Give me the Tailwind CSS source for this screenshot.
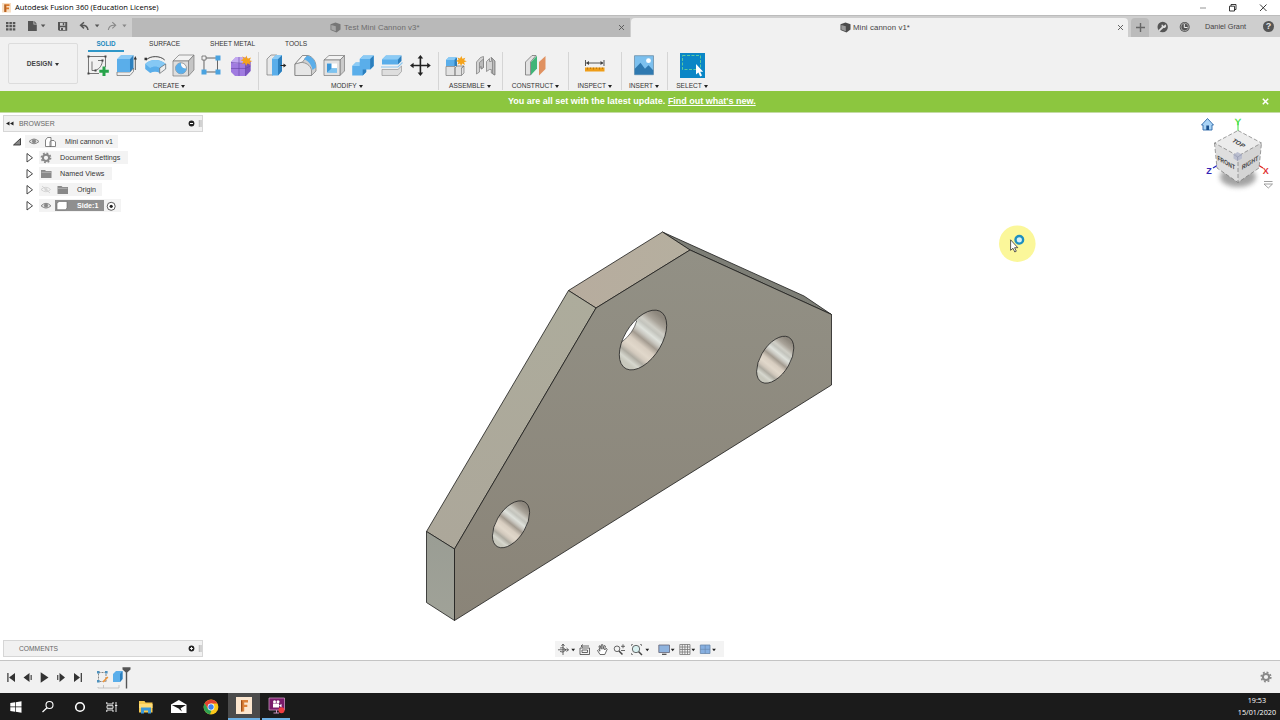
<!DOCTYPE html>
<html lang="en">
<head>
    <meta charset="UTF-8">
    <meta name="viewport" content="width=device-width, initial-scale=1.0">
    <title>Autodesk Fusion 360</title>
    <script src="https://cdn.jsdelivr.net/npm/@tailwindcss/browser@4"></script>
</head>
<body class="bg-white overflow-hidden">
<div class="w-[1280px] h-[720px] flex flex-col overflow-hidden font-['Liberation_Sans',Arial,sans-serif] text-[6.6px] leading-none text-[#333]">

    <!-- Title bar -->
    <header class="h-[15px] shrink-0 flex items-center bg-white">
        <svg class="w-[11px] h-[11px] ml-[1px]" viewBox="0 0 11 11">
            <rect x="1" y="1" width="9" height="9.5" fill="#f8dfc4"/>
            <path d="M3.5 10V2.2H8.5V4H5.5V5.5H8V7.2H5.5V10Z" fill="#d9792b"/>
            <path d="M3.5 10V2.2L4.5 3V10Z" fill="#9c4f16"/>
        </svg>
        <span class="ml-[3px] pt-[1px] font-['Open_Sans',sans-serif] text-[7.6px] text-black whitespace-nowrap">Autodesk Fusion 360 (Education License)</span>
        <svg class="w-[80px] h-[14px] ml-auto" viewBox="1200 0 80 14" fill="none" stroke="#222" stroke-width="0.9">
            <path d="M1199.5 7H1206" stroke="#888"/>
            <path d="M1229.5 5.2H1234.5V10H1229.5ZM1231 5V3.5H1236V8.5H1234.5"/>
            <path d="M1260 3.5L1266.5 10M1266.5 3.5L1260 10"/>
        </svg>
    </header>

    <!-- Document tabs -->
    <nav class="h-[22px] shrink-0 flex items-stretch bg-[#cecece] border-t border-[#bcbcbc] text-[7.8px]">
        <svg class="w-[132px] h-[21px] shrink-0" viewBox="0 16 132 21" fill="#555">
            <path d="M6 22h2.5v2.2H6zM9.4 22h2.5v2.2H9.4zM12.8 22h2.5v2.2h-2.5zM6 25.1h2.5v2.2H6zM9.4 25.1h2.5v2.2H9.4zM12.8 25.1h2.5v2.2h-2.5zM6 28.2h2.5v2.2H6zM9.4 28.2h2.5v2.2H9.4zM12.8 28.2h2.5v2.2h-2.5z"/>
            <path d="M28 21H33.5V24.5H36.8V31H28ZM34.3 21L36.8 23.7H34.3Z"/>
            <path d="M40.8 24.5H45.4L43.1 27.3ZM94.8 24.5H99.4L97.1 27.3Z"/>
            <path d="M122.3 24.5H126.5L124.4 27.2Z" fill="#888"/>
            <path d="M58 22H67.2V30.8H59L58 29.8ZM60 22.8V25.8H65.3V22.8ZM60 27.3V30H65.3V27.3Z" fill-rule="evenodd"/>
            <path d="M61 28H63V30H61ZM62.8 23H64.2V25.2H62.8Z"/>
            <path d="M84 22.2L80.6 25.3L84 28.4M81 25.3C85.5 24.8 87.5 26.5 88 30" fill="none" stroke="#555" stroke-width="1.5"/>
            <path d="M112.3 22.2L115.7 25.3L112.3 28.4M115.3 25.3C110.8 24.8 108.8 26.5 108.3 30" fill="none" stroke="#888" stroke-width="1.1"/>
        </svg>
        <div class="w-[498px] mt-[2px] flex items-center bg-[#b9b9b9] text-[#6c6c6c]">
            <svg class="w-[11px] h-[11px] ml-[198px]" viewBox="0 0 11 11">
                <path d="M.5 2.2L5.5 .5L10.5 2.2V7.5L6.5 10.5L.5 8Z" fill="#777"/>
                <path d="M1.3 3L5.8 4.3V9.3L1.3 7.4Z" fill="#a6a6a6"/>
            </svg>
            <span class="ml-[3px] pt-px whitespace-nowrap tracking-[0.1px]">Test Mini Cannon v3*</span>
            <svg class="w-[7px] h-[7px] ml-auto mr-[5px]" viewBox="0 0 7 7" stroke="#555" stroke-width="0.9"><path d="M1 1L6 6M6 1L1 6"/></svg>
        </div>
        <div class="w-[497px] ml-[1px] mt-[2px] flex items-center bg-[#f1f1f1] rounded-t-sm text-[#444]">
            <svg class="w-[11px] h-[11px] ml-[209px]" viewBox="0 0 11 11">
                <path d="M.5 2.2L5.5 .5L10.5 2.2V7.5L6.5 10.5L.5 8Z" fill="#4c4c4c"/>
                <path d="M1.3 3L5.8 4.3V9.3L1.3 7.4Z" fill="#999"/>
            </svg>
            <span class="ml-[2px] pt-px whitespace-nowrap tracking-[0.1px]">Mini cannon v1*</span>
            <svg class="w-[7px] h-[7px] ml-auto mr-[4px]" viewBox="0 0 7 7" stroke="#555" stroke-width="0.9"><path d="M1 1L6 6M6 1L1 6"/></svg>
        </div>
        <div class="w-[18px] ml-[3px] mt-[2px] flex items-center justify-center bg-[#bbb] rounded-t-sm">
            <svg class="w-[9px] h-[9px]" viewBox="0 0 9 9" stroke="#666" stroke-width="1.4"><path d="M4.5 0V9M0 4.5H9"/></svg>
        </div>
        <div class="flex-1 flex items-center text-[#444] text-[7.3px]">
            <svg class="w-[50px] h-[14px]" viewBox="1149 19 50 14">
                <circle cx="1162.7" cy="26" r="5.2" fill="#555"/>
                <path d="M1159 29.8L1163 26" stroke="#ddd" stroke-width="1.8"/>
                <path d="M1165.5 23.2L1163.7 25L1162 23.2A2.4 2.4 0 1 0 1166.3 25Z" fill="#ddd"/>
                <circle cx="1184.7" cy="26" r="5" fill="#555"/>
                <circle cx="1184.7" cy="26" r="3.8" fill="none" stroke="#bbb" stroke-width=".7"/>
                <path d="M1184.3 23V26.5H1187.5" fill="none" stroke="#eee"/>
            </svg>
            <span class="ml-[6px] whitespace-nowrap">Daniel Grant</span>
            <span class="w-[11px] h-[11px] ml-auto mr-[6px] rounded-full bg-[#555] text-[#e5e5e5] text-[9px] font-bold flex items-center justify-center">?</span>
        </div>
    </nav>

    <!-- Ribbon -->
    <section class="h-[54px] shrink-0 flex bg-[#f1f1f1]">
        <div class="w-[70px] h-[41px] ml-[8px] mt-[6px] pt-[1px] flex items-center justify-center gap-[3px] border border-[#dcdcdc] rounded-xs font-bold text-[#444]">
            DESIGN <span class="border-x-2 border-x-transparent border-t-[3px] border-t-[#333]"></span>
        </div>
        <div class="ml-[6px] flex flex-col">
            <div class="h-[15px] flex">
                <div class="w-[36px] ml-[4px] pt-[2px] flex items-center justify-center border-b-2 border-[#2f97c8] text-[#2088bd] font-bold text-[6.3px]">SOLID</div>
                <span class="w-[31px] ml-[25px] mt-[4px] whitespace-nowrap">SURFACE</span>
                <span class="w-[46px] ml-[30px] mt-[4px] whitespace-nowrap">SHEET METAL</span>
                <span class="ml-[29px] mt-[4px] whitespace-nowrap">TOOLS</span>
            </div>
            <div class="flex h-[38px] divide-x divide-[#d5d5d5]">
                <div class="w-[175px] flex flex-col">
                    <div class="flex h-[28px]">
                        <svg class="w-[28.8px] h-[28px]" viewBox="0 0 28.8 28" fill="none" stroke="#555" stroke-width=".8">
                            <path d="M4.5 4V22M4 4.5H22M4 21.5H15M21.5 4V15"/>
                            <path d="M8 18.5V9.5M8 18.5H12M11 18.5C16 17 18 13 18.5 8.5H14"/>
                            <path d="M3.5 3.5h2v2h-2zM20.5 3.5h2v2h-2zM3.5 20.5h2v2h-2zM10.5 17.5h2v2h-2zM17.5 7.5h2v2h-2z" fill="#444" stroke="none"/>
                            <path d="M20 14.5V24M15.3 19.2H24.8" stroke="#27a34a" stroke-width="3"/>
                        </svg>
                        <svg class="w-[28.8px] h-[28px]" viewBox="0 0 28.8 28">
                            <path d="M4 20L17 20L20.5 16V19.5L17 23.5H4Z" fill="#eee" stroke="#555" stroke-width=".6"/>
                            <path d="M4 7L8 3H20.5L17 7Z" fill="#8ccbf5"/><path d="M4 7H17V20H4Z" fill="#5aaeea"/><path d="M17 7L20.5 3V16L17 20Z" fill="#2c7fbd"/>
                            <path d="M22.3 18V6" stroke="#333" stroke-width=".8"/><path d="M20.7 7.5L22.3 4L23.9 7.5Z" fill="#333"/>
                        </svg>
                        <svg class="w-[28.8px] h-[28px]" viewBox="0.8 0 28.8 28">
                            <path d="M5 8C9 3.5 19 3.5 23.5 8" fill="none" stroke="#333" stroke-width=".9"/><path d="M3.3 5.7h2.5v2.5H3.3z" fill="#333"/>
                            <path d="M4 12C9 6.5 19 6.5 24.5 12V17L18.5 21C16 19.5 12 19.5 9 21L4 17Z" fill="#5aaeea"/>
                            <path d="M4 12C9 6.5 19 6.5 24.5 12L18.5 16C16 14 12 14 9 16Z" fill="#85c8f4"/>
                            <path d="M18.5 16L24.5 12V17L18.5 21.5Z" fill="#eee" stroke="#555" stroke-width=".6"/>
                        </svg>
                        <svg class="w-[28.8px] h-[28px]" viewBox="0 0 28.8 28" stroke="#777" stroke-width=".7">
                            <path d="M3 9L9 3H24L18.5 9Z" fill="#f2f2f2"/><path d="M18.5 9L24 3V18L18.5 24Z" fill="#c5c5c5"/><path d="M3 9H18.5V24H3Z" fill="#dedede"/>
                            <circle cx="11" cy="16.3" r="5.5" fill="#fafafa"/><path d="M11 10.8A5.5 5.5 0 1 0 16.5 16.3C13 17 10.5 14.5 11 10.8Z" fill="#5aaeea" stroke="none"/>
                        </svg>
                        <svg class="w-[28.8px] h-[28px]" viewBox="0 0 28.8 28">
                            <path d="M5 6V20H18.5V6Z" fill="none" stroke="#555" stroke-width=".9"/>
                            <path d="M3 4h4v4H3z" fill="#f1f1f1" stroke="#555" stroke-width=".7"/>
                            <path d="M16.5 3.5h5v5h-5zM2.5 17.5h5v5h-5zM16.5 17.5h5v5h-5z" fill="#4aa3e0"/>
                        </svg>
                        <svg class="w-[28.8px] h-[28px]" viewBox="0 0 28.8 28">
                            <path d="M3 10L8 5H18L22.5 9V19L18 24H7L3 20Z" fill="#a07be0"/><path d="M3 10L8 5H18L22.5 9L17 11.5H6Z" fill="#c3aaf1"/><path d="M17.5 11.5L22.5 9V19L17.5 24Z" fill="#7b55bf"/>
                            <path d="M11 5V24M3 16.5H17.5L22.5 14M17.5 11V24M3 10.5L17.5 11.5" fill="none" stroke="#6644a6" stroke-width=".6"/>
                            <path d="M18.4 3.5L19.6 6.8L23 5.5L21.6 8.4L24.5 9L21.6 10.3L22.5 13L19.5 11.3L18 14L17 11L14 12L15.3 9.3L12.5 8.3L15.5 7L14.3 4.3L17.2 6.2Z" fill="#f5a31b"/>
                        </svg>
                    </div>
                    <div class="h-[10px] pt-[2px] pl-[69px] flex items-center gap-[2px]">CREATE <span class="border-x-2 border-x-transparent border-t-[3px] border-t-[#222]"></span></div>
                </div>
                <div class="w-[180px] pl-[3px] flex flex-col">
                    <div class="flex h-[28px]">
                        <svg class="w-[28.8px] h-[28px]" viewBox="0 0 28.8 28">
                            <path d="M5 7L9 3H15L11 7V23H5Z" fill="#e8e8e8" stroke="#777" stroke-width=".7"/>
                            <path d="M10 7L14 3H20V19L16 23.5H10Z" fill="#5aaeea"/><path d="M16 7L20 3V19L16 23.5Z" fill="#2c7fbd"/><path d="M10 7L14 3H20L16 7Z" fill="#8ccbf5"/>
                            <path d="M18.5 13.5H22" stroke="#222"/><path d="M21.5 11.5L24.3 13.5L21.5 15.5Z" fill="#222"/>
                        </svg>
                        <svg class="w-[28.8px] h-[28px]" viewBox="-0.5 0 28.8 28" stroke="#777" stroke-width=".7">
                            <path d="M3.5 12L11 3.5H17C21 5 24.5 9 24.5 15V19L20 23.5H3.5Z" fill="#d0d0d0"/>
                            <path d="M3.5 12C3.5 12 5 10.5 11 10.5C16 11 20 15 20 19V23.5H3.5Z" fill="#e6e6e6"/><path d="M3.5 12L11 3.5H16L11 10Z" fill="#f5f5f5"/>
                            <path d="M12.5 7L16 3.5C21 5 24.5 9 24.5 15.5L21 18C20 13 17.5 9.5 12.5 7Z" fill="#5aaeea" stroke="none"/>
                        </svg>
                        <svg class="w-[28.8px] h-[28px]" viewBox="0 0 28.8 28" stroke="#777" stroke-width=".7">
                            <path d="M4 8L9 3.5H24.5L20 8Z" fill="#f3f3f3"/><path d="M20 8L24.5 3.5V19L20 23.5Z" fill="#cbcbcb"/><path d="M4 8H20V23.5H4Z" fill="#e2e2e2"/>
                            <path d="M7 11.5H17V20.5H7Z" fill="#fff" stroke="none"/><path d="M7 11.5L11.5 11.5V16.5H17V20.5H7Z" fill="#3d97d8" stroke="none"/><path d="M7 20.5L11.5 16.5H17V20.5Z" fill="#7cc3f0" stroke="none"/>
                        </svg>
                        <svg class="w-[28.8px] h-[28px]" viewBox="-0.7 0 28.8 28">
                            <path d="M11 7L14.5 3.5H25V14L21.5 17.5H17.5V20L14 23.5H3.5V14L7 10.5H11Z" fill="#5aaeea"/>
                            <path d="M11 7L14.5 3.5H25L21.5 7ZM3.5 14L7 10.5H11V14Z" fill="#8ccbf5"/><path d="M21.5 7L25 3.5V14L21.5 17.5ZM14 17.5H17.5V20L14 23.5Z" fill="#2c7fbd"/>
                        </svg>
                        <svg class="w-[28.8px] h-[28px]" viewBox="-0.5 0 28.8 28">
                            <path d="M4.5 7.5L8.5 3.5H24L20.5 7.5V12.5H4.5Z" fill="#5aaeea"/><path d="M4.5 7.5L8.5 3.5H24L20.5 7.5Z" fill="#8ccbf5"/><path d="M20.5 7.5L24 3.5V9L20.5 12.5Z" fill="#2c7fbd"/>
                            <path d="M3.5 15H20.5L25 10.5" fill="none" stroke="#8cc6ee" stroke-width="1.1"/>
                            <path d="M4.5 17.5H20.5L24 14V19.5L20.5 23.5H4.5Z" fill="#dedede" stroke="#888" stroke-width=".6"/>
                        </svg>
                        <svg class="w-[28.8px] h-[28px]" viewBox="0 0.5 28.8 28">
                            <path d="M14.4 6V22M6.5 14H22.3" stroke="#222" stroke-width="1.6"/>
                            <path d="M11.6 7L14.4 3.5L17.2 7ZM11.6 21L14.4 24.5L17.2 21ZM7.6 11.2L4 14L7.6 16.8ZM21.2 11.2L24.8 14L21.2 16.8Z" fill="#222"/>
                        </svg>
                    </div>
                    <div class="h-[10px] pt-[2px] pl-[69px] flex items-center gap-[2px]">MODIFY <span class="border-x-2 border-x-transparent border-t-[3px] border-t-[#222]"></span></div>
                </div>
                <div class="w-[64px] pl-[3px] flex flex-col">
                    <div class="flex h-[28px]">
                        <svg class="w-[28.8px] h-[28px]" viewBox="0 0 28.8 28">
                            <path d="M4 8L7 5H14V14H4Z" fill="#5aaeea"/><path d="M4 8L7 5H14L12.5 8Z" fill="#8ccbf5"/><path d="M12.5 8L15 5V14H12.5Z" fill="#2c7fbd"/>
                            <path d="M4 14.5H13V23.5H4ZM13 16L15 14H22L19.5 16V23.5H13ZM19.5 16L22 14V21L19.5 23.5" fill="#e2e2e2" stroke="#777" stroke-width=".7"/>
                            <path d="M19.4 4L20.4 6.8L23.3 5.7L22.1 8.2L24.8 9.2L22.1 10.3L23 13L20.3 11.6L19 14L18 11.5L15.5 12.5L16.4 9.9L14 9L16.5 7.8L15.5 5.5L18 6.6Z" fill="#f5a31b"/>
                        </svg>
                        <svg class="w-[28.8px] h-[28px]" viewBox="0 0 28.8 28" fill="#d3d3d3" stroke="#777" stroke-width=".7">
                            <path d="M5.5 10L9.5 5.5L12.5 4.5V15.5L10.2 17V14.5L8.5 15.5V20L5.5 22Z"/>
                            <path d="M8.5 10.5L12.5 7V15.5L10.2 17V14.5L8.5 15.5Z" fill="#bcbcbc"/>
                            <path d="M15.5 9.5L18.5 6.5V9.5H20.3V5.5L23.8 9V23L20.3 21V17.5H18.5L15.5 19.5Z"/>
                            <path d="M20.3 5.5L23.8 9V23L21.5 21.5V9Z" fill="#bcbcbc"/>
                        </svg>
                    </div>
                    <div class="h-[10px] pt-[2px] pl-[7px] flex items-center gap-[2px]">ASSEMBLE <span class="border-x-2 border-x-transparent border-t-[3px] border-t-[#222]"></span></div>
                </div>
                <div class="w-[66px] flex flex-col items-center">
                    <svg class="w-[28.8px] h-[28px]" viewBox="0 0 28.8 28">
                        <path d="M4.5 10L11 3.5H15L9.5 10V23H4.5Z" fill="#e2e2e2" stroke="#666" stroke-width=".7"/>
                        <path d="M10 10L16 3.8V16.5L10 23Z" fill="#41b578"/><path d="M18 10L24.5 4V17L18 23.5Z" fill="#e09160"/>
                    </svg>
                    <div class="h-[10px] pt-[2px] flex items-center gap-[2px]">CONSTRUCT <span class="border-x-2 border-x-transparent border-t-[3px] border-t-[#222]"></span></div>
                </div>
                <div class="w-[52.5px] flex flex-col items-center">
                    <svg class="w-[28.8px] h-[28px]" viewBox="-0.5 0 28.8 28">
                        <path d="M5 8V14M23.5 8V14M6 11H22.5" stroke="#444" stroke-width=".9"/><path d="M5.5 11L8.5 9V13ZM23 11L20 9V13Z" fill="#444"/>
                        <path d="M4.5 15.5H24V19.5H4.5Z" fill="#ef9d17"/><path d="M7 15.5V17.5M10 15.5V17M13 15.5V17.5M16 15.5V17M19 15.5V17.5M22 15.5V17" stroke="#9c6107" stroke-width=".6"/>
                    </svg>
                    <div class="h-[10px] pt-[2px] flex items-center gap-[2px]">INSPECT <span class="border-x-2 border-x-transparent border-t-[3px] border-t-[#222]"></span></div>
                </div>
                <div class="w-[46px] flex flex-col items-center">
                    <svg class="w-[28.8px] h-[28px]" viewBox="0 0.3 28.8 28">
                        <path d="M4.5 4H23.5V23H4.5Z" fill="#7cc0ee" stroke="#6c8fa8" stroke-width=".8"/>
                        <path d="M4.8 17L10.5 11L15 17L18.5 13.5L23.2 18.5V22.7H4.8Z" fill="#2f79b0"/><circle cx="18.5" cy="9" r="2.4" fill="#fff"/>
                    </svg>
                    <div class="h-[10px] pt-[2px] flex items-center gap-[2px]">INSERT <span class="border-x-2 border-x-transparent border-t-[3px] border-t-[#222]"></span></div>
                </div>
                <div class="w-[49px] flex flex-col items-center">
                    <svg class="w-[28.8px] h-[28px]" viewBox="0 0 28.8 28">
                        <path d="M2 1H27V26H2Z" fill="#0a86c6"/>
                        <path d="M4.5 3.5H22.5V17.5H4.5Z" fill="none" stroke="#66d29b" stroke-width=".9" stroke-dasharray="3 1.5"/>
                        <path d="M18 12V22.5L20.4 20.5L22.2 24.5L24 23.6L22.2 19.8H25.2Z" fill="#fff"/>
                    </svg>
                    <div class="h-[10px] pt-[2px] flex items-center gap-[2px]">SELECT <span class="border-x-2 border-x-transparent border-t-[3px] border-t-[#222]"></span></div>
                </div>
            </div>
        </div>
    </section>

    <!-- Update notice -->
    <div class="h-[21px] shrink-0 flex items-center bg-[#8cc63f] text-white font-bold text-[9px]">
        <p class="ml-[508px] whitespace-nowrap">You are all set with the latest update. <a class="underline">Find out what's new.</a></p>
        <svg class="w-[7px] h-[7px] ml-auto mr-[11px]" viewBox="0 0 7 7" stroke="#fff" stroke-width="1.5"><path d="M.8 .8L6.2 6.2M6.2 .8L.8 6.2"/></svg>
    </div>

    <!-- Viewport -->
    <main class="h-[548px] shrink-0 relative bg-white border-t border-[#c5dba5]">
        <svg class="absolute left-0 -top-px w-[1280px] h-[548px]" viewBox="0 112 1280 548">
            <defs>
                <linearGradient id="bore" x1=".8" y1=".11" x2=".2" y2=".86">
                    <stop offset="0" stop-color="#8d877d"/><stop offset=".12" stop-color="#a8a298"/>
                    <stop offset=".22" stop-color="#cfcec6"/><stop offset=".28" stop-color="#c3c4bd"/>
                    <stop offset=".36" stop-color="#dfe2dc"/><stop offset=".43" stop-color="#c8c6bf"/>
                    <stop offset=".5" stop-color="#a39b90"/><stop offset=".6" stop-color="#d8cec1"/>
                    <stop offset=".7" stop-color="#e1d8cb"/><stop offset=".78" stop-color="#d2c9bd"/>
                    <stop offset=".85" stop-color="#aeaba1"/><stop offset=".94" stop-color="#d6d7ce"/><stop offset="1" stop-color="#c8c8bd"/>
                </linearGradient>
                <linearGradient id="front" x1="0" y1="0" x2="0" y2="1"><stop offset="0" stop-color="#929085"/><stop offset="1" stop-color="#8a8478"/></linearGradient>
                <linearGradient id="bevel" x1="0" y1="0" x2="0" y2="1"><stop offset="0" stop-color="#adac9c"/><stop offset="1" stop-color="#aca79a"/></linearGradient>
                <linearGradient id="top" x1="0" y1="0" x2="1" y2="0"><stop offset="0" stop-color="#b7ac9e"/><stop offset="1" stop-color="#b5af9f"/></linearGradient>
                <linearGradient id="side" x1="0" y1="0" x2="0" y2="1"><stop offset="0" stop-color="#9a9d94"/><stop offset="1" stop-color="#a0a298"/></linearGradient>
                <clipPath id="hole1"><circle r="1" transform="matrix(23.7 -14.8 0 26 643 340)"/></clipPath>
                <clipPath id="hole2"><circle r="1" transform="matrix(18.6 -11.6 0 20.4 775.2 359.7)"/></clipPath>
                <clipPath id="hole3"><circle r="1" transform="matrix(18.6 -11.6 0 20.4 511 524.3)"/></clipPath>
                <filter id="soft" x="-50%" y="-50%" width="200%" height="200%"><feGaussianBlur stdDeviation="2.5"/></filter>
            </defs>

            <!-- bracket -->
            <g stroke="#1c1c1a" stroke-width=".8" stroke-linejoin="round">
                <path d="M662.5 232L804 296L831.5 314.5L690 250Z" fill="#7d7e76"/>
                <path d="M568.5 290.5L662.5 232L690 250L596 308Z" fill="url(#top)"/>
                <path d="M426.5 531.5L568.5 290.5L596 308L454.5 549Z" fill="url(#bevel)"/>
                <path d="M426.5 531.5L454.5 549V620.5L426.5 602.5Z" fill="url(#side)"/>
                <path d="M454.5 549L596 308L690 250L831.5 314.5V385L454.5 620.5Z" fill="url(#front)"/>
            </g>
            <g clip-path="url(#hole1)"><rect x="613" y="310" width="60" height="60" fill="url(#bore)"/><path d="M616 344L630 316L636.7 321Q633 333 623 341Z" fill="#fff" stroke="#222" stroke-width=".6"/></g>
            <g clip-path="url(#hole2)"><rect x="751.7" y="336" width="47" height="47" fill="url(#bore)"/></g>
            <g clip-path="url(#hole3)"><rect x="487.5" y="501" width="47" height="47" fill="url(#bore)"/></g>
            <g fill="none" stroke="#222" stroke-width=".8">
                <circle r="1" transform="matrix(23.7 -14.8 0 26 643 340)" vector-effect="non-scaling-stroke"/>
                <circle r="1" transform="matrix(18.6 -11.6 0 20.4 775.2 359.7)" vector-effect="non-scaling-stroke"/>
                <circle r="1" transform="matrix(18.6 -11.6 0 20.4 511 524.3)" vector-effect="non-scaling-stroke"/>
            </g>

            <!-- pointer with busy ring -->
            <circle cx="1017.3" cy="243.7" r="18.3" fill="#fbf79a"/>
            <circle cx="1019.3" cy="239.8" r="3.8" fill="#d5f0f5" stroke="#1d8fc0" stroke-width="2.4"/>
            <path d="M1010.6 239.8V250.3L1013 248.3L1014.8 252L1016.3 251.2L1014.6 247.7H1017.8Z" fill="#fff" stroke="#333" stroke-width=".8"/>

            <!-- view cube -->
            <ellipse cx="1238" cy="177" rx="18" ry="10" fill="#666" opacity=".6" filter="url(#soft)"/>
            <path d="M1238 122V131" stroke="#3be03b"/><path d="M1218 165L1213 168" stroke="#22b" stroke-width="1.4"/><path d="M1258 165L1263 168" stroke="#d22" stroke-width="1.4"/>
            <path d="M1238 130.5L1261.5 143L1238 156L1214.5 143Z" fill="#ececec"/>
            <path d="M1214.5 143L1238 156V182.5L1217 168Z" fill="#dedede"/>
            <path d="M1261.5 143L1238 156V182.5L1259 168Z" fill="#d4d4d4"/>
            <path d="M1238 130.5L1261.5 143L1238 156L1214.5 143ZM1214.5 143L1217 168L1238 182.5L1259 168L1261.5 143M1238 156V182.5" fill="none" stroke="#777" stroke-width=".7" stroke-dasharray="4 2"/>
            <path d="M1233.5 154.5L1237.5 152L1242 154.5V158.5L1237.5 161L1233.5 158.5Z" fill="#b4b8cd" opacity=".85"/>
            <path d="M1233.5 154.5L1237.5 157L1242 154.5M1237.5 157V161" fill="none" stroke="#888fa8" stroke-width=".5"/>
            <g font-weight="bold" fill="#444" text-anchor="middle" font-size="6.6">
                <text transform="matrix(.85 .5 -.75 .6 1237 144.5)">TOP</text>
                <text transform="matrix(.78 .45 .05 1.05 1226.3 165)">FRONT</text>
                <text transform="matrix(.8 -.5 -.05 1.05 1250 165)">RIGHT</text>
            </g>
            <text x="1237.8" y="125.3" text-anchor="middle" font-size="9.5" fill="#3be03b" stroke="#3be03b" stroke-width=".3">Y</text>
            <text x="1209" y="174" text-anchor="middle" font-size="9" font-weight="bold" fill="#3424b5">Z</text>
            <text x="1265.7" y="174.3" text-anchor="middle" font-size="9" font-weight="bold" fill="#e03434">X</text>
            <path d="M1201.5 125L1207.5 118.5L1213.5 125H1212V130H1203V125Z" fill="#a9d3f5" stroke="#2b67a8" stroke-width=".9"/><path d="M1206.3 130V125.5H1209V130Z" fill="#174f8d"/>
            <path d="M1264 181.5H1272.5M1264 184H1272.5L1268.3 188Z" fill="none" stroke="#888" stroke-width=".8"/>
        </svg>

        <!-- Browser panel -->
        <aside class="absolute left-[3px] top-[2px] w-[200px] flex flex-col">
            <div class="h-[17px] flex items-center bg-[#f1f1f1] border border-[#d6d6d6] text-[#666] text-[6.9px]">
                <svg class="w-[8px] h-[5px] ml-[2px]" viewBox="0 0 8 5"><path d="M0 2.5L3.5 .5V4.5ZM4 2.5L7.5 .5V4.5Z" fill="#222"/></svg>
                <span class="ml-[5px] pt-[1px]">BROWSER</span>
                <svg class="w-[16px] h-[9px] ml-auto" viewBox="0 0 16 9"><circle cx="5.5" cy="4.5" r="2.9" fill="#222"/><path d="M4 4.5H7" stroke="#fff"/><path d="M13.3 1V8M15 1V8" stroke="#999" stroke-width=".7"/></svg>
            </div>
            <ul class="mt-[3px] ml-[8px] flex flex-col gap-[3px] text-[7.15px] text-[#333] whitespace-nowrap">
                <li class="h-[13px] flex items-center">
                    <svg class="w-[14px] h-[13px]" viewBox="0 0 14 13"><path d="M2.5 10H9.5V3.5Z" fill="#888" stroke="#222" stroke-width=".8"/></svg>
                    <div class="h-[13px] w-[93px] flex items-center bg-[#f3f3f3]">
                        <svg class="w-[34px] h-[13px]" viewBox="0 0 34 13"><path d="M4 6.5Q9 1.5 14 6.5Q9 11 4 6.5Z" fill="#ddd" stroke="#888"/><circle cx="9" cy="6.3" r="2" fill="#888"/><path d="M20.5 5L22.5 2.5H26V11.5H20.5ZM25 6.5L26.5 5.5H29L30.5 7V11.5H25Z" fill="#fff" stroke="#666" stroke-width=".8"/></svg>
                        <span class="ml-[6px] pt-[2px]">Mini cannon v1</span>
                    </div>
                </li>
                <li class="h-[13px] ml-[14px] flex items-center">
                    <svg class="w-[14px] h-[13px]" viewBox="0 0 14 13"><path d="M2 2.5L7.5 6.8L2 11Z" fill="#fff" stroke="#333" stroke-width=".9"/></svg>
                    <div class="h-[13px] w-[89px] flex items-center bg-[#f3f3f3]">
                        <svg class="w-[20px] h-[13px]" viewBox="0 0 20 13"><circle cx="7" cy="6.8" r="3.1" fill="none" stroke="#888" stroke-width="2"/><circle cx="7" cy="6.8" r="4.6" fill="none" stroke="#888" stroke-width="1.6" stroke-dasharray="1.8 1.8"/></svg>
                        <span class="ml-[1px] pt-[2px]">Document Settings</span>
                    </div>
                </li>
                <li class="h-[13px] ml-[14px] flex items-center">
                    <svg class="w-[14px] h-[13px]" viewBox="0 0 14 13"><path d="M2 2.5L7.5 6.8L2 11Z" fill="#fff" stroke="#333" stroke-width=".9"/></svg>
                    <div class="h-[13px] w-[73px] flex items-center bg-[#f3f3f3]">
                        <svg class="w-[20px] h-[13px]" viewBox="0 0 20 13" fill="#888"><path d="M2 3H6L7 4H12.5V11H2Z"/><path d="M2.5 5.3H12" stroke="#ddd" stroke-width=".5"/></svg>
                        <span class="ml-[1px] pt-[2px] tracking-[0.05px]">Named Views</span>
                    </div>
                </li>
                <li class="h-[13px] ml-[14px] flex items-center">
                    <svg class="w-[14px] h-[13px]" viewBox="0 0 14 13"><path d="M2 2.5L7.5 6.8L2 11Z" fill="#fff" stroke="#333" stroke-width=".9"/></svg>
                    <div class="h-[13px] w-[63px] flex items-center bg-[#f3f3f3]">
                        <svg class="w-[34px] h-[13px]" viewBox="0 0 34 13"><path d="M2 6.5Q7 2 11.5 6.5Q7 11 2 6.5ZM3 3L11 10" fill="none" stroke="#ccc" stroke-width=".8"/><circle cx="7" cy="6.5" r="1.5" fill="#d5d5d5"/><path d="M18.5 3H22.5L23.5 4H29V11H18.5Z" fill="#888"/><path d="M19 5.3H28.5" stroke="#ddd" stroke-width=".5"/></svg>
                        <span class="ml-[4px] pt-[2px]">Origin</span>
                    </div>
                </li>
                <li class="h-[13px] ml-[14px] flex items-center">
                    <svg class="w-[14px] h-[13px]" viewBox="0 0 14 13"><path d="M2 2.5L7.5 6.8L2 11Z" fill="#fff" stroke="#333" stroke-width=".9"/></svg>
                    <div class="h-[13px] w-[82px] flex items-center bg-[#f3f3f3]">
                        <svg class="w-[16px] h-[13px]" viewBox="0 0 16 13"><path d="M2 6.8Q7 1.8 12 6.8Q7 11.3 2 6.8Z" fill="#ddd" stroke="#888"/><circle cx="7" cy="6.6" r="2" fill="#888"/></svg>
                        <div class="h-[11px] w-[49px] flex items-center bg-[#8f8f8f] text-white font-bold">
                            <svg class="w-[14px] h-[11px]" viewBox="0 0 14 11"><path d="M2 3.2L4 1.5H12V8L10.5 9.7H2Z" fill="#fff" stroke="#666" stroke-width=".6"/></svg>
                            <span class="ml-[8px] pt-[2px]">Side:1</span>
                        </div>
                        <svg class="w-[10px] h-[10px] ml-[2px]" viewBox="0 0 10 10"><circle cx="5.2" cy="5.3" r="4" fill="#fff" stroke="#333" stroke-width=".8"/><circle cx="5.2" cy="5.3" r="1.6" fill="#222"/></svg>
                    </div>
                </li>
            </ul>
        </aside>

        <!-- Comments panel -->
        <div class="absolute left-[3px] bottom-[3px] w-[200px] h-[17px] flex items-center bg-[#f1f1f1] border border-[#d6d6d6] text-[#666] text-[6.7px]">
            <span class="ml-[15px] pt-[1px]">COMMENTS</span>
            <svg class="w-[16px] h-[9px] ml-auto" viewBox="0 0 16 9"><circle cx="5.5" cy="4.5" r="2.9" fill="#222"/><path d="M4 4.5H7M5.5 3V6" stroke="#fff" stroke-width=".9"/><path d="M13.3 1V8M15 1V8" stroke="#999" stroke-width=".7"/></svg>
        </div>

        <!-- Navigation bar -->
        <div class="absolute left-[555px] bottom-[3px] w-[169px] h-[16px] bg-[#f3f3f3]">
            <svg class="w-[169px] h-[16px]" viewBox="555 641 169 16" fill="none" stroke="#444" stroke-width=".8">
                <path d="M563 644.5V655M558 649.8H568.5M561.5 646L563 644L564.5 646M566.5 648L568.5 649.8L566.5 651.5"/><path d="M560 648Q563 646.5 566 649.8Q563 653.5 560 651.5"/>
                <path d="M580 648H589.5V654.5H580ZM582 650H587.5V652.5H582ZM581 646H589M583 644.5L581 646L583 647.5"/>
                <path d="M600 654.5L597.5 650.5L598.5 649.8L600 651.2L599 646L600.2 645.8L601.2 649.2L601.4 644.7H602.8L603 649.2L604.2 645.5L605.4 646L604.6 650L606.3 648.3L607.2 649.2L604.8 654.5Z" fill="#fff"/>
                <circle cx="617" cy="648.8" r="2.8"/><path d="M619 651L622.5 654.5" stroke-width="1.5"/><path d="M621 646.3H625M623 644.3V648.3M621 650.5H625"/>
                <circle cx="636" cy="649" r="3.7" fill="#d8efef"/><path d="M638.7 651.8L642 655" stroke-width="1.5"/><path d="M631.5 646V644.5H633M640 644.5H641.5V646M631.5 653V654.5H633" stroke-width=".6"/>
                <path d="M658.8 645H669.5V652.5H658.8Z" fill="#8fb3de" stroke="#667"/><path d="M662 654.3H666.5" stroke-width="1.2"/>
                <path d="M679.8 644.5H690V654.5H679.8ZM682.3 644.5V654.5M684.9 644.5V654.5M687.5 644.5V654.5M679.8 647H690M679.8 649.5H690M679.8 652H690" stroke="#777"/>
                <path d="M700.3 645H710V653.5H700.3Z" fill="#86afe0" stroke="#6785a8"/><path d="M705.2 645V653.5M700.3 649.3H710" stroke="#6785a8" stroke-width=".6"/>
                <path d="M571.3 648.8H575.1L573.2 651.3ZM645.4 648.8H649.2L647.3 651.3ZM670.8 648.8H674.6L672.7 651.3ZM691.4 648.8H695.2L693.3 651.3ZM712.1 648.8H715.9L714 651.3Z" fill="#222" stroke="none"/>
            </svg>
        </div>
    </main>

    <!-- Timeline -->
    <section class="h-[33px] shrink-0 flex items-center justify-between bg-[#f1f1f1] border-t border-[#c4c4c4]">
        <svg class="w-[140px] h-[32px]" viewBox="0 661 140 32" fill="#333">
            <path d="M7.3 673H8.5V682H7.3ZM15 673V682L9 677.5Z"/>
            <path d="M29.5 673V682L23.5 677.5ZM30.6 675H31.7V680H30.6Z"/>
            <path d="M40.7 672.3V682.7L48.5 677.5Z"/>
            <path d="M59.5 673V682L65 677.5ZM57.2 675H58.3V680H57.2Z"/>
            <path d="M74 673V682L80 677.5ZM80.7 673H81.9V682H80.7Z"/>
            <path d="M98.5 672.5H106V681.5H98.5Z" fill="none" stroke="#555" stroke-width=".7" stroke-dasharray="2 1"/><path d="M97 671h2.6v2.6H97zM105 671h2.6v2.6H105zM97 680h2.6v2.6H97z" fill="#4d91bd"/><path d="M103 682L107.8 677" stroke="#ee9438" stroke-width="1.7"/>
            <path d="M113 674L116 671H122.5V679L120 682H113Z" fill="#5aaeea"/><path d="M120 674L122.5 671V679L120 682Z" fill="#2c7fbd"/>
            <path d="M98 687V688H119V685M103.5 688V685" fill="none" stroke="#bbb" stroke-width=".8"/>
            <path d="M122.5 667.3H130.5V669.5L127.2 672.5V688.5H125.8V672.5L122.5 669.5Z" fill="#555"/>
        </svg>
        <svg class="w-[14px] h-[14px] mr-[7px]" viewBox="0 0 14 14" fill="none" stroke="#888"><circle cx="7" cy="7" r="3.1" stroke-width="2"/><circle cx="7" cy="7" r="4.8" stroke-width="1.6" stroke-dasharray="1.9 1.87"/></svg>
    </section>

    <!-- Taskbar -->
    <footer class="h-[27px] shrink-0 flex items-stretch bg-[#1b1b1b] text-white">
        <svg class="w-[228px] h-[27px]" viewBox="0 693 228 27">
            <path d="M10.3 703L15 702.3V706.5H10.3ZM15.7 702.2L21.5 701.3V706.5H15.7ZM10.3 707.3H15V711.7L10.3 711ZM15.7 707.3H21.5V712.7L15.7 711.8Z" fill="#fff"/>
            <circle cx="49.5" cy="705" r="3.5" fill="none" stroke="#fff" stroke-width="1.1"/><path d="M47 707.7L42.5 712" stroke="#fff" stroke-width="1.2"/>
            <circle cx="80" cy="707" r="4.3" fill="none" stroke="#fff" stroke-width="1.6"/>
            <path d="M106.8 702V704H113V702M106.8 712V710H113V712M107 705.7H113V708.3H107ZM116 702V712M115 705.5H117.3" fill="none" stroke="#fff" stroke-width=".9"/>
            <path d="M139 701H144.5L145.5 702.5H152.5V712.5H139Z" fill="#f6ca50"/><path d="M139 704H152.5V708H139Z" fill="#ffdc76"/><path d="M141 713.5V707.5H151V713.5H148V710.5H144V713.5Z" fill="#3b98d9"/>
            <path d="M171 704.5L178.8 700L186.5 704.5V713H171Z" fill="#fff"/><path d="M171.8 705H186L179.5 709Z" fill="#1b1b1b"/><path d="M179 709L182 711.5L180 707Z" fill="#1b1b1b"/>
            <circle cx="211" cy="707" r="7.4" fill="#fbc71a"/><path d="M204.6 703.3A7.4 7.4 0 0 1 217.5 703.5H211L207.7 709Z" fill="#e24133"/><path d="M204.6 703.3L208 709L211.5 710.5L210 714.3A7.4 7.4 0 0 1 204.6 703.3Z" fill="#2ea253"/><circle cx="211" cy="707" r="3.4" fill="#fff"/><circle cx="211" cy="707" r="2.7" fill="#3e82ee"/>
        </svg>
        <div class="w-[32px] flex items-center justify-center bg-[#4b4b4b] border-b-2 border-[#6cb0e4]">
            <svg class="w-[16px] h-[17px]" viewBox="0 0 16 17"><path d="M0 0H16V17H0Z" fill="#fbe6cf"/><path d="M5 14.5V3H12V5.5H8.2V7.8H11.3V10H8.2V14.5Z" fill="#dd8239"/><path d="M5 14.5V3L6.3 4V14.5Z" fill="#9a4e18"/></svg>
        </div>
        <div class="w-[28px] ml-[2px] pl-[2px] flex items-center justify-center border-b-2 border-[#6cb0e4]">
            <svg class="w-[18px] h-[18px]" viewBox="0 0 18 18"><path d="M1 1H16.5V13H1Z" fill="#7a1c6b" stroke="#c994c0" stroke-width=".8"/><path d="M5 6.5H11V10.5H5ZM11 8.5L13.5 7V10.5Z" fill="#fff"/><circle cx="6.5" cy="4.8" r="1.5" fill="#fff"/><circle cx="10" cy="4.8" r="1.5" fill="#fff"/><path d="M5.5 16H11M8.5 13V16" stroke="#c994c0"/><circle cx="13.5" cy="13.2" r="3" fill="#ef3d42"/></svg>
        </div>
        <div class="ml-auto mr-[4px] flex flex-col items-end justify-center gap-[5px] font-['Open_Sans',sans-serif] text-[7.2px]">
            <span class="mr-[10px]">19:53</span>
            <span>15/01/2020</span>
        </div>
    </footer>
</div>
</body>
</html>
